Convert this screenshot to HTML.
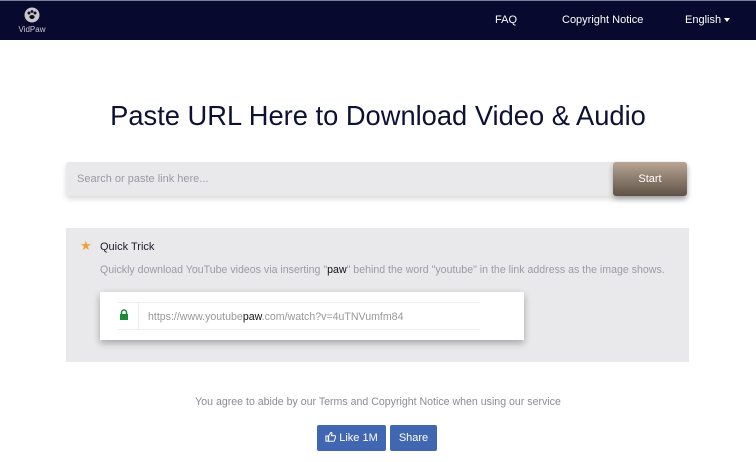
<!DOCTYPE html>
<html><head><meta charset="utf-8"><style>
*{margin:0;padding:0;box-sizing:border-box}
body{width:756px;height:462px;background:#fff;font-family:"Liberation Sans",Arial,sans-serif;position:relative;overflow:hidden}
.nav{position:absolute;left:0;top:0;width:756px;height:40px;background:#07092e;border-top:1px solid #7a7f9a}
.logo{position:absolute;left:17px;top:6px;width:30px;text-align:center;color:#c8c8d0;font-size:8px}
.nav a{position:absolute;top:13px;color:#fff;font-size:11px;text-decoration:none}
.caret{display:inline-block;width:0;height:0;border-left:3.5px solid transparent;border-right:3.5px solid transparent;border-top:4px solid #fff;vertical-align:middle;margin-left:3px}
h1{position:absolute;top:100px;left:0;width:756px;text-align:center;font-weight:normal;font-size:27.3px;color:#0d1133}
.search{position:absolute;left:66px;top:162px;width:620px;height:34px;background:#e9e9eb;box-shadow:0 3px 6px rgba(0,0,0,.15);border-radius:3px}
.search span{position:absolute;left:11px;top:11px;font-size:11px;color:#9a9aa2}
.start{position:absolute;left:613px;top:162px;width:74px;height:34px;border-radius:3px;background:linear-gradient(#b8a594,#5e5246);color:#fff;font-size:11px;text-align:center;line-height:34px;box-shadow:0 3px 6px rgba(0,0,0,.3)}
.box{position:absolute;left:66px;top:228px;width:623px;height:134px;background:#e9e9eb}
.qt{position:absolute;left:34px;top:13px;font-size:11px;color:#1a1a2a}
.star{position:absolute;left:14px;top:10px;color:#f0a030;font-size:13px}
.desc{position:absolute;left:34px;top:36px;font-size:10.6px;color:#9a9ca6;white-space:nowrap}
.desc b{color:#111;font-weight:normal}
.card{position:absolute;left:34px;top:64px;width:424px;height:48px;background:#fff;box-shadow:0 3px 7px rgba(0,0,0,.3)}
.line{position:absolute;left:18px;right:44px;height:1px;background:#eee}
.url{position:absolute;left:48px;top:19px;font-size:10.6px;color:#999}
.url b{color:#111;font-weight:normal}
.sep{position:absolute;left:38px;top:11px;width:1px;height:27px;background:#eee}
.agree{position:absolute;top:396px;width:756px;text-align:center;font-size:10.6px;color:#8a8c96}
.btn{position:absolute;top:425px;height:26px;background:#4267b2;color:#fff;font-size:11px;line-height:26px;text-align:center;border-radius:2px}
</style></head><body>
<div class="nav">
<div class="logo"><svg width="16" height="16" viewBox="0 0 16 16" style="display:block;margin:0 auto 2px"><circle cx="8" cy="8" r="7.5" fill="#c8c8c8"/><circle cx="5" cy="6" r="1.5" fill="#07092e"/><circle cx="11" cy="6" r="1.5" fill="#07092e"/><circle cx="8" cy="4.5" r="1.4" fill="#07092e"/><ellipse cx="8" cy="10" rx="2.6" ry="2" fill="#07092e"/></svg>VidPaw</div>
<a style="left:495px">FAQ</a><a style="left:562px">Copyright Notice</a><a style="left:685px">English<span class="caret"></span></a>
</div>
<h1>Paste URL Here to Download Video &amp; Audio</h1>
<div class="search"><span>Search or paste link here...</span></div>
<div class="start">Start</div>
<div class="box">
<div class="star">★</div><div class="qt">Quick Trick</div>
<div class="desc">Quickly download YouTube videos via inserting "<b>paw</b>" behind the word "youtube" in the link address as the image shows.</div>
<div class="card"><div class="line" style="top:10px"></div><div class="line" style="top:37px"></div><div class="sep"></div>
<svg style="position:absolute;left:19px;top:17px" width="10" height="11" viewBox="0 0 10 11"><path d="M2.5 5V3.5a2.5 2.5 0 0 1 5 0V5" stroke="#1a8a3a" stroke-width="1.5" fill="none"/><rect x="1" y="5" width="8" height="6" fill="#1a8a3a"/></svg>
<div class="url">https://www.youtube<b>paw</b>.com/watch?v=4uTNVumfm84</div></div>
</div>
<div class="agree">You agree to abide by our Terms and Copyright Notice when using our service</div>
<div class="btn" style="left:317px;width:69px"><svg width="11" height="11" viewBox="0 0 12 12" style="vertical-align:-1px;margin-right:3px"><path d="M1 5.5h2.5v5.5H1z M4 5.5 6.5 1.5c1 0 1.3.8 1 2L7 5h3.5c.8 0 1.2.7 1 1.4l-1.2 4c-.2.5-.6.8-1.1.8H4z" fill="none" stroke="#fff" stroke-width="1.1"/></svg>Like 1M</div>
<div class="btn" style="left:390px;width:47px">Share</div>
</body></html>
